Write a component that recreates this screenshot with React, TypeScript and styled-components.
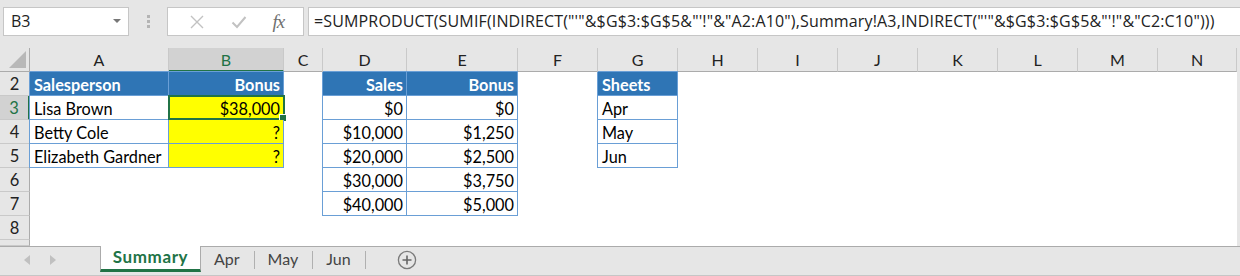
import React from 'react';
import styled, { createGlobalStyle } from 'styled-components';

const GlobalStyle = createGlobalStyle`
  html, body {
    margin: 0;
    padding: 0;
    background: #e6e6e6;
  }
  * {
    box-sizing: border-box;
  }
`;

const GREEN = '#217346';
const TABLE_BLUE = '#2f75b5';
const TABLE_LINE = '#6a9fd6';

const SWindow = styled.div`
  width: 1240px;
  height: 276px;
  overflow: hidden;
  display: flex;
  flex-direction: column;
  background: #e6e6e6;
  font-family: Lato, 'Liberation Sans', sans-serif;
`;

// ---------- formula bar ----------

const SFormulaBar = styled.div`
  height: 48px;
  display: flex;
  align-items: flex-start;
  padding: 7px 0 0 3px;
`;

const SNameBox = styled.div`
  width: 126px;
  height: 29px;
  background: #fff;
  border: 1px solid #c6c6c6;
  display: flex;
  align-items: center;
  justify-content: space-between;
  padding: 0 7px 1px 7px;
  font-family: 'Open Sans', 'Liberation Sans', sans-serif;
  font-size: 16px;
  color: #222;
`;

const SCaret = styled.span`
  width: 0;
  height: 0;
  border-left: 4px solid transparent;
  border-right: 4px solid transparent;
  border-top: 4px solid #777;
`;

const SGrip = styled.div`
  width: 38px;
  height: 29px;
  display: flex;
  flex-direction: column;
  align-items: center;
  justify-content: center;
  gap: 2px;

  span {
    width: 3px;
    height: 3px;
    background: #b4b4b4;
  }
`;

const SFxBox = styled.div`
  width: 137px;
  height: 29px;
  background: #fff;
  border: 1px solid #c6c6c6;
  display: flex;
  align-items: center;
  justify-content: space-around;
  padding: 0 6px 0 8px;
`;

const SFx = styled.span`
  font-family: 'Liberation Serif', serif;
  font-style: italic;
  font-size: 19px;
  color: #707070;
  letter-spacing: -1px;
`;

const SFormulaInput = styled.div`
  flex: 1;
  height: 29px;
  margin-left: 4px;
  background: #fff;
  border: 1px solid #c6c6c6;
  border-right: none;
  display: flex;
  align-items: center;
  padding: 0 0 1px 5px;
  font-family: 'Open Sans', 'Liberation Sans', sans-serif;
  font-size: 16px;
  letter-spacing: 0.15px;
  color: #222;
  white-space: nowrap;
  overflow: hidden;
`;

// ---------- sheet grid ----------

const SSheet = styled.div`
  display: grid;
  grid-template-columns: 30px 139px 115px 39px 84px 111px repeat(8, 80px) 79px;
  grid-template-rows: 24px repeat(7, 24px) 6px;
  width: 1237px;
  height: 198px;
  overflow: hidden;
`;

const SCorner = styled.div`
  background: #e6e6e6;
  border-right: 1px solid #ababab;
  border-bottom: 1px solid #ababab;
  display: flex;
  align-items: flex-end;
  justify-content: flex-end;
  padding: 0 3px 3px 0;
`;

const SColHeader = styled.div<{ $active?: boolean }>`
  background: ${(p) => (p.$active ? '#d2d2d2' : '#e6e6e6')};
  color: ${(p) => (p.$active ? GREEN : '#222')};
  border-right: 1px solid #c9c9c9;
  border-bottom: ${(p) => (p.$active ? `2px solid ${GREEN}` : '1px solid #ababab')};
  display: flex;
  align-items: center;
  justify-content: center;
  font-size: 16px;
  padding-top: ${(p) => (p.$active ? '1px' : '0')};
`;

const SRowHeader = styled.div<{ $active?: boolean }>`
  background: ${(p) => (p.$active ? '#d2d2d2' : '#e6e6e6')};
  color: ${(p) => (p.$active ? GREEN : '#222')};
  border-right: ${(p) => (p.$active ? `2px solid ${GREEN}` : '1px solid #ababab')};
  border-bottom: 1px solid #c9c9c9;
  display: flex;
  align-items: center;
  justify-content: center;
  font-size: 16.5px;
  padding-top: 1px;
`;

const SCell = styled.div<{
  $fill?: string;
  $align?: 'left' | 'right';
  $bold?: boolean;
  $lineTop?: boolean;
  $lineLeft?: boolean;
  $lined?: boolean;
}>`
  position: relative;
  background: ${(p) => p.$fill || '#fff'};
  color: ${(p) => (p.$fill === TABLE_BLUE ? '#fff' : '#000')};
  font-weight: ${(p) => (p.$bold ? 700 : 400)};
  font-size: 16.3px;
  display: flex;
  align-items: center;
  justify-content: ${(p) => (p.$align === 'right' ? 'flex-end' : 'flex-start')};
  padding: 2px 3px 0 4px;
  white-space: nowrap;
  border-right: 1px solid ${(p) => (p.$lined ? TABLE_LINE : 'transparent')};
  border-bottom: 1px solid ${(p) => (p.$lined ? TABLE_LINE : 'transparent')};
  box-shadow: ${(p) =>
    [p.$lineTop && `0 -1px 0 ${TABLE_LINE}`, p.$lineLeft && `-1px 0 0 ${TABLE_LINE}`]
      .filter(Boolean)
      .join(', ') || 'none'};
  z-index: ${(p) => (p.$lined ? 1 : 0)};
`;

const SSelection = styled.div`
  position: absolute;
  left: -1px;
  top: -1px;
  right: -2px;
  bottom: -1px;
  border: 2px solid ${GREEN};
  z-index: 2;
  pointer-events: none;

  &::after {
    content: '';
    position: absolute;
    right: -4px;
    bottom: -4px;
    width: 6px;
    height: 6px;
    background: ${GREEN};
    border: 1px solid #fff;
  }
`;

// ---------- sheet tabs ----------

const STabStrip = styled.div`
  height: 30px;
  display: flex;
  align-items: stretch;
  border-top: 1px solid #ababab;
  border-bottom: 1px solid #c6c6c6;
  background: #e6e6e6;
  width: 1240px;
`;

const SNav = styled.div`
  width: 100px;
  display: flex;
  align-items: center;
  padding: 0 0 2px 24px;
  gap: 20px;
`;

const SArrow = styled.span<{ $dir: 'left' | 'right' }>`
  width: 0;
  height: 0;
  border-top: 5px solid transparent;
  border-bottom: 5px solid transparent;
  ${(p) =>
    p.$dir === 'left'
      ? 'border-right: 6px solid #c0c0c0;'
      : 'border-left: 6px solid #c0c0c0;'}
`;

const STab = styled.div<{ $active?: boolean }>`
  display: flex;
  align-items: center;
  justify-content: center;
  height: ${(p) => (p.$active ? '26px' : '27px')};
  margin-top: ${(p) => (p.$active ? '-1px' : '0')};
  padding: ${(p) => (p.$active ? '0 0 2px 0' : '0 14px 4px 13px')};
  width: ${(p) => (p.$active ? '101px' : 'auto')};
  background: ${(p) => (p.$active ? '#fff' : 'transparent')};
  border-left: ${(p) => (p.$active ? '1px solid #ababab' : 'none')};
  border-right: ${(p) => (p.$active ? '1px solid #ababab' : 'none')};
  border-bottom: ${(p) => (p.$active ? `3px solid ${GREEN}` : 'none')};
  color: ${(p) => (p.$active ? GREEN : '#444')};
  font-weight: ${(p) => (p.$active ? 700 : 400)};
  font-size: ${(p) => (p.$active ? '17px' : '16px')};
  letter-spacing: ${(p) => (p.$active ? '0.6px' : '0')};
`;

const SDivider = styled.span`
  width: 1px;
  height: 18px;
  align-self: center;
  margin-top: -3px;
  background: #b0b0b0;
`;

const SAddSheet = styled.div`
  display: flex;
  align-items: center;
  padding: 0 0 3px 31px;
`;

// ---------- data ----------

const COLS = ['A', 'B', 'C', 'D', 'E', 'F', 'G', 'H', 'I', 'J', 'K', 'L', 'M', 'N'];
const ROWS = [2, 3, 4, 5, 6, 7, 8, 9];

interface CellData {
  text?: string;
  fill?: string;
  align?: 'left' | 'right';
  bold?: boolean;
}

const YELLOW = '#ffff00';

const CELLS: Record<string, CellData> = {
  A2: { text: 'Salesperson', fill: TABLE_BLUE, bold: true },
  B2: { text: 'Bonus', fill: TABLE_BLUE, bold: true, align: 'right' },
  A3: { text: 'Lisa Brown' },
  B3: { text: '$38,000', fill: YELLOW, align: 'right' },
  A4: { text: 'Betty Cole' },
  B4: { text: '?', fill: YELLOW, align: 'right' },
  A5: { text: 'Elizabeth Gardner' },
  B5: { text: '?', fill: YELLOW, align: 'right' },

  D2: { text: 'Sales', fill: TABLE_BLUE, bold: true, align: 'right' },
  E2: { text: 'Bonus', fill: TABLE_BLUE, bold: true, align: 'right' },
  D3: { text: '$0', align: 'right' },
  E3: { text: '$0', align: 'right' },
  D4: { text: '$10,000', align: 'right' },
  E4: { text: '$1,250', align: 'right' },
  D5: { text: '$20,000', align: 'right' },
  E5: { text: '$2,500', align: 'right' },
  D6: { text: '$30,000', align: 'right' },
  E6: { text: '$3,750', align: 'right' },
  D7: { text: '$40,000', align: 'right' },
  E7: { text: '$5,000', align: 'right' },

  G2: { text: 'Sheets', fill: TABLE_BLUE, bold: true },
  G3: { text: 'Apr' },
  G4: { text: 'May' },
  G5: { text: 'Jun' },
};

// tables as [firstCol, lastCol, firstRow, lastRow]
const TABLES: [string, string, number, number][] = [
  ['A', 'B', 2, 5],
  ['D', 'E', 2, 7],
  ['G', 'G', 2, 5],
];

const tableEdge = (col: string, row: number) => {
  const ci = COLS.indexOf(col);
  for (const [c1, c2, r1, r2] of TABLES) {
    const a = COLS.indexOf(c1);
    const b = COLS.indexOf(c2);
    if (ci >= a && ci <= b && row >= r1 && row <= r2) {
      return { lined: true, top: row === r1, left: ci === a };
    }
  }
  return { lined: false, top: false, left: false };
};

const FORMULA =
  '=SUMPRODUCT(SUMIF(INDIRECT("\'"&$G$3:$G$5&"\'!"&"A2:A10"),Summary!A3,INDIRECT("\'"&$G$3:$G$5&"\'!"&"C2:C10")))';

const ACTIVE_COL = 'B';
const ACTIVE_ROW = 3;
// the last row is only a sliver at the bottom edge, its number is hidden
const LAST_FULL_ROW = 8;

const CancelIcon = () => (
  <svg width="16" height="16" viewBox="0 0 16 16">
    <path d="M2 2 L14 14 M14 2 L2 14" stroke="#c2c2c2" strokeWidth="1.4" fill="none" />
  </svg>
);

const EnterIcon = () => (
  <svg width="16" height="14" viewBox="0 0 16 14">
    <path d="M1.5 7.5 L6 12 L14.5 2" stroke="#c2c2c2" strokeWidth="2" fill="none" />
  </svg>
);

const CornerTriangle = () => (
  <svg width="17" height="17" viewBox="0 0 17 17">
    <polygon points="17,0 17,17 0,17" fill="#b8b8b8" />
  </svg>
);

const PlusIcon = () => (
  <svg width="20" height="20" viewBox="0 0 20 20">
    <circle cx="10" cy="10" r="8.6" stroke="#7a7a7a" strokeWidth="1.3" fill="none" />
    <path d="M10 5.5 V14.5 M5.5 10 H14.5" stroke="#666" strokeWidth="1.6" />
  </svg>
);

const App = () => {
  return (
    <>
      <GlobalStyle />
      <SWindow>
        <SFormulaBar>
          <SNameBox>
            B3
            <SCaret />
          </SNameBox>
          <SGrip>
            <span />
            <span />
            <span />
          </SGrip>
          <SFxBox>
            <CancelIcon />
            <EnterIcon />
            <SFx>fx</SFx>
          </SFxBox>
          <SFormulaInput>{FORMULA}</SFormulaInput>
        </SFormulaBar>

        <SSheet>
          <SCorner>
            <CornerTriangle />
          </SCorner>
          {COLS.map((c) => (
            <SColHeader key={c} $active={c === ACTIVE_COL}>
              {c}
            </SColHeader>
          ))}
          {ROWS.map((r) => (
            <React.Fragment key={r}>
              <SRowHeader $active={r === ACTIVE_ROW}>{r <= LAST_FULL_ROW ? r : ''}</SRowHeader>
              {COLS.map((c) => {
                const id = `${c}${r}`;
                const data = CELLS[id] || {};
                const edge = tableEdge(c, r);
                return (
                  <SCell
                    key={id}
                    $fill={data.fill}
                    $align={data.align}
                    $bold={data.bold}
                    $lined={edge.lined}
                    $lineTop={edge.top}
                    $lineLeft={edge.left}
                  >
                    {data.text}
                    {c === ACTIVE_COL && r === ACTIVE_ROW && <SSelection />}
                  </SCell>
                );
              })}
            </React.Fragment>
          ))}
        </SSheet>

        <STabStrip>
          <SNav>
            <SArrow $dir="left" />
            <SArrow $dir="right" />
          </SNav>
          <STab $active>Summary</STab>
          <STab>Apr</STab>
          <SDivider />
          <STab>May</STab>
          <SDivider />
          <STab>Jun</STab>
          <SDivider />
          <SAddSheet>
            <PlusIcon />
          </SAddSheet>
        </STabStrip>
      </SWindow>
    </>
  );
};

export default App;
